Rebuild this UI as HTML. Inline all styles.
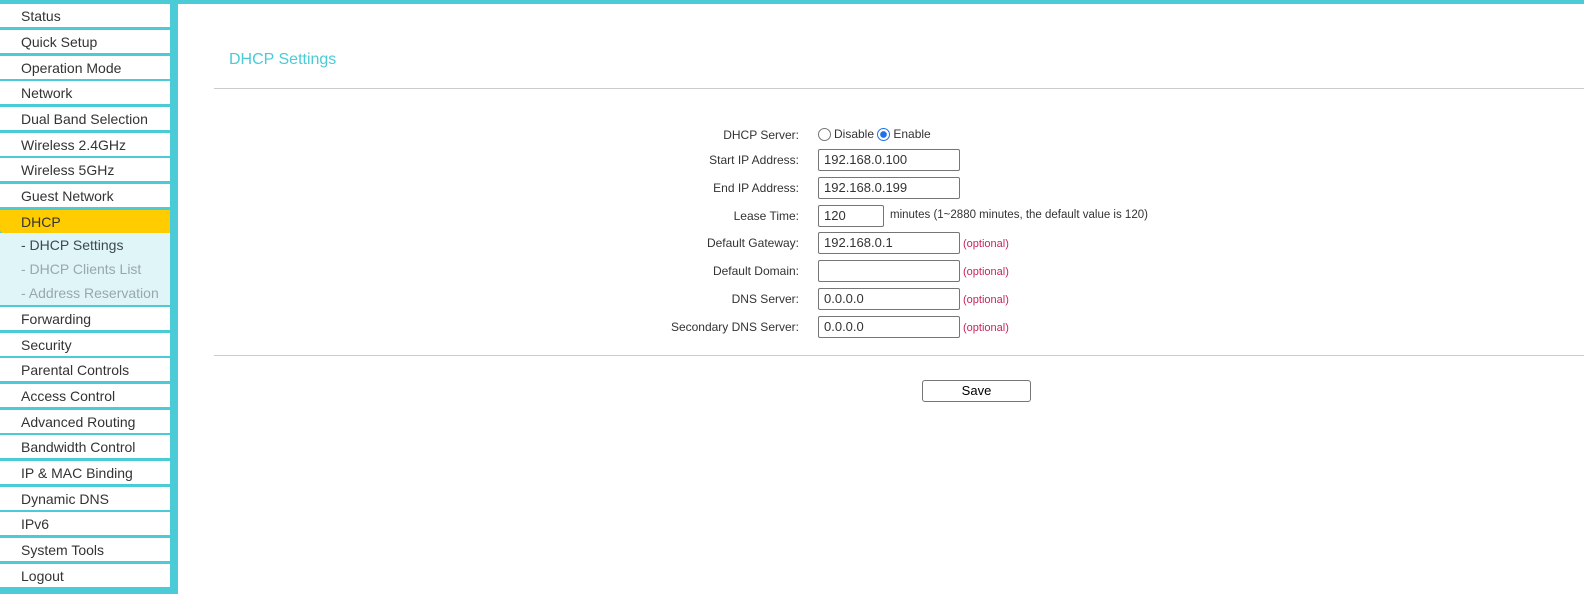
<!DOCTYPE html>
<html><head><style>
body{margin:0;width:1584px;height:600px;background:#fff;font-family:"Liberation Sans",Arial,sans-serif;position:relative;overflow:hidden}
.top{position:absolute;left:0;top:0;width:1584px;height:4px;background:#4acbd6}
.side{position:absolute;left:0;top:0;width:178px;height:594px;background:#4acbd6}
.it{position:absolute;left:0;width:170px;height:23px;background:#fff;font-size:14px;color:#333;line-height:24px;padding-left:21px;box-sizing:border-box}
.dh{background:#ffcc00;border-radius:0 0 0 3px}
.sub{position:absolute;left:0;top:233px;width:170px;height:72px;background:#e0f5f7}
.sub div{height:24px;line-height:24px;padding-left:21px;font-size:14px;color:#99a8ab}
h1{position:absolute;left:229px;top:51px;margin:0;font-size:16px;font-weight:normal;color:#4acbd6}
.hr{position:absolute;left:214px;width:1370px;height:1px;background:#ccc}
.lb{position:absolute;right:785px;font-size:12px;color:#333;text-align:right;white-space:nowrap}
.in{position:absolute;left:818px;width:142px;height:22px;box-sizing:border-box;border:1px solid #767676;border-radius:2px;font-size:13px;color:#333;line-height:20px;padding-left:5px}
.op{position:absolute;left:963px;font-size:11px;color:#c8245d}
.rd{display:inline-block;width:13px;height:13px;border:1px solid #767676;border-radius:50%;vertical-align:-3px;box-sizing:border-box;margin-right:3px}
</style></head><body>
<div class="top"></div>
<div class="side"></div>
<div class="it" style="top:4px">Status</div>
<div class="it" style="top:30px">Quick Setup</div>
<div class="it" style="top:56px">Operation Mode</div>
<div class="it" style="top:81px">Network</div>
<div class="it" style="top:107px">Dual Band Selection</div>
<div class="it" style="top:133px">Wireless 2.4GHz</div>
<div class="it" style="top:158px">Wireless 5GHz</div>
<div class="it" style="top:184px">Guest Network</div>
<div class="it dh" style="top:210px">DHCP</div>
<div class="sub"><div style="color:#3d4a4d">- DHCP Settings</div><div>- DHCP Clients List</div><div>- Address Reservation</div></div>
<div class="it" style="top:307px">Forwarding</div>
<div class="it" style="top:333px">Security</div>
<div class="it" style="top:358px">Parental Controls</div>
<div class="it" style="top:384px">Access Control</div>
<div class="it" style="top:410px">Advanced Routing</div>
<div class="it" style="top:435px">Bandwidth Control</div>
<div class="it" style="top:461px">IP &amp; MAC Binding</div>
<div class="it" style="top:487px">Dynamic DNS</div>
<div class="it" style="top:512px">IPv6</div>
<div class="it" style="top:538px">System Tools</div>
<div class="it" style="top:564px">Logout</div>

<h1>DHCP Settings</h1>
<div class="hr" style="top:88px"></div>

<div class="lb" style="top:128px">DHCP Server:</div>
<div style="position:absolute;left:818px;top:127px;font-size:12px;color:#333"><span class="rd"></span>Disable <span class="rd" style="border:1px solid #1a73e8;background:radial-gradient(circle,#1a73e8 0 3px,#fff 3.6px)"></span>Enable</div>

<div class="lb" style="top:153px">Start IP Address:</div>
<div class="in" style="top:149px">192.168.0.100</div>
<div class="lb" style="top:181px">End IP Address:</div>
<div class="in" style="top:177px">192.168.0.199</div>
<div class="lb" style="top:209px">Lease Time:</div>
<div class="in" style="top:205px;width:66px">120</div>
<div style="position:absolute;left:890px;top:209px;font-size:11.5px;color:#333">minutes (1~2880 minutes, the default value is 120)</div>
<div class="lb" style="top:236px">Default Gateway:</div>
<div class="in" style="top:232px">192.168.0.1</div><div class="op" style="top:238px">(optional)</div>
<div class="lb" style="top:264px">Default Domain:</div>
<div class="in" style="top:260px"></div><div class="op" style="top:266px">(optional)</div>
<div class="lb" style="top:292px">DNS Server:</div>
<div class="in" style="top:288px">0.0.0.0</div><div class="op" style="top:294px">(optional)</div>
<div class="lb" style="top:320px">Secondary DNS Server:</div>
<div class="in" style="top:316px">0.0.0.0</div><div class="op" style="top:322px">(optional)</div>

<div class="hr" style="top:355px"></div>
<div style="position:absolute;left:922px;top:380px;width:109px;height:22px;box-sizing:border-box;border:1px solid #767676;border-radius:3px;background:#fff;text-align:center;font-size:13px;line-height:20px;color:#000">Save</div>
</body></html>
